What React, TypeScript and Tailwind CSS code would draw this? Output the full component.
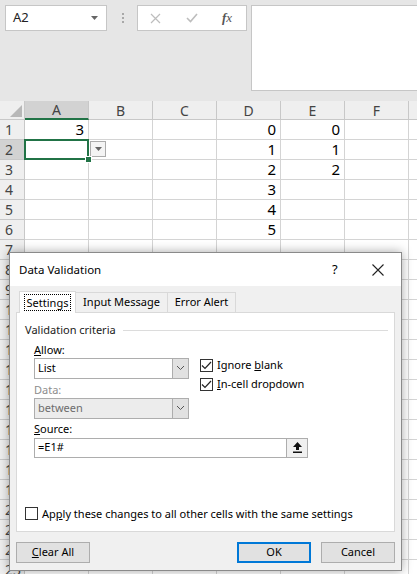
import React from 'react';

const COLS = ['A', 'B', 'C', 'D', 'E', 'F'];
const ROWS = Array.from({ length: 23 }, (_, i) => i + 1);
const DATA: Record<string, string> = {
  A1: '3',
  D1: '0', E1: '0',
  D2: '1', E2: '1',
  D3: '2', E3: '2',
  D4: '3', D5: '4', D6: '5',
};

const ui = { fontFamily: '"Noto Sans", "Segoe UI", sans-serif' };

function Chevron() {
  return (
    <svg width="9" height="6" viewBox="0 0 9 6" fill="none" stroke="#555" strokeWidth="1">
      <path d="M1 1 L4.5 4.5 L8 1" />
    </svg>
  );
}

function Check({ checked }: { checked?: boolean }) {
  return (
    <span className="flex h-[13px] w-[13px] shrink-0 items-center justify-center border border-[#333] bg-white">
      {checked && (
        <svg width="11" height="9" viewBox="0 0 11 9" fill="none" stroke="#222" strokeWidth="1.2">
          <path d="M1 4.5 L4 7.5 L10 1" />
        </svg>
      )}
    </span>
  );
}

function TopBar() {
  return (
    <div className="flex h-[101px] items-start bg-[#e6e6e6] pt-[5px] pl-[5px]">
      <div className="flex h-[26px] w-[102px] items-center justify-between border border-[#c6c6c6] bg-white pl-[7px] pr-[8px] text-[13px] text-[#222]" style={ui}>
        <span>A2</span>
        <svg width="7" height="4" viewBox="0 0 7 4"><path d="M0 0 H7 L3.5 4 Z" fill="#666" /></svg>
      </div>
      <div className="ml-[15px] mt-[8px] flex h-[10px] flex-col justify-between">
        <span className="h-[2px] w-[2px] bg-[#a8a8a8]" />
        <span className="h-[2px] w-[2px] bg-[#a8a8a8]" />
        <span className="h-[2px] w-[2px] bg-[#a8a8a8]" />
      </div>
      <div className="ml-[13px] flex h-[26px] w-[110px] items-center border border-[#c6c6c6] bg-white pl-[12px]">
        <svg width="11" height="11" viewBox="0 0 11 11" stroke="#bdbdbd" strokeWidth="1.2">
          <path d="M1 1 L10 10 M10 1 L1 10" />
        </svg>
        <svg className="ml-[25px]" width="12" height="10" viewBox="0 0 12 10" fill="none" stroke="#bdbdbd" strokeWidth="1.6">
          <path d="M1 5 L4.5 8.5 L11 1" />
        </svg>
        <span className="ml-[24px] text-[13px] italic text-[#555]" style={{ fontFamily: '"Liberation Serif", serif' }}>
          <b>f</b>x
        </span>
      </div>
      <div className="ml-[4px] h-[86px] flex-1 border border-[#c6c6c6] border-r-0 bg-white" />
    </div>
  );
}

function Sheet() {
  return (
    <div className="grid grid-cols-[25px_repeat(6,64px)_8px] bg-white text-[14px]" style={ui}>
      <div className="relative h-[19px] border-r border-b border-[#c8c8c8] bg-[#efefef]">
        <svg className="absolute bottom-[2px] right-[2px]" width="12" height="12" viewBox="0 0 12 12">
          <path d="M12 0 V12 H0 Z" fill="#b8b8b8" />
        </svg>
      </div>
      {COLS.map((c) => (
        <div
          key={c}
          className={`flex h-[19px] items-center justify-center border-r border-[#c8c8c8] text-[#444] ${
            c === 'A' ? 'border-b-2 border-b-[#217346] bg-[#d2d2d2]' : 'border-b border-b-[#c8c8c8] bg-[#efefef]'
          }`}
        >
          {c}
        </div>
      ))}
      <div className="h-[19px] border-b border-[#c8c8c8] bg-[#efefef]" />
      {ROWS.map((r) => (
        <React.Fragment key={r}>
          <div
            className={`flex h-[20px] items-center pl-[5px] text-[#444] border-r border-b border-[#c8c8c8] ${
              r === 2 ? 'bg-[#d2d2d2]' : 'bg-[#efefef]'
            }`}
          >
            {r}
          </div>
          {COLS.map((c) => (
            <div
              key={c}
              className="relative flex h-[20px] items-center justify-end border-r border-b border-[#d4d4d4] pr-[4px] text-[15px] text-black"
            >
              {DATA[c + r]}
              {c === 'A' && r === 2 && (
                <>
                  <span className="absolute -left-px -top-px h-[21px] w-[65px] border-2 border-[#217346]" />
                  <span className="absolute -bottom-[4px] -right-[4px] z-10 h-[7px] w-[7px] border border-white bg-[#217346]" />
                  <span className="absolute left-[65px] top-[1px] flex h-[16px] w-[16px] items-center justify-center border border-[#ababab] bg-[#f4f4f4]">
                    <svg width="7" height="4" viewBox="0 0 7 4"><path d="M0 0 H7 L3.5 4 Z" fill="#666" /></svg>
                  </span>
                </>
              )}
            </div>
          ))}
          <div className="h-[20px] border-b border-[#d4d4d4]" />
        </React.Fragment>
      ))}
    </div>
  );
}

function Select({ value, disabled }: { value: string; disabled?: boolean }) {
  return (
    <div
      className={`flex h-[21px] w-[155px] items-center border border-[#adadad] ${
        disabled ? 'bg-[#ececec] text-[#6d6d6d]' : 'bg-white text-black'
      }`}
    >
      <span className="flex-1 pl-[3px]">{value}</span>
      <span className="flex h-full w-[16px] items-center justify-center border-l border-[#adadad] bg-[#e1e1e1]">
        <Chevron />
      </span>
    </div>
  );
}

function Dialog() {
  return (
    <div
      className="absolute left-[9px] top-[252px] flex h-[319px] w-[393px] flex-col border border-[#8a8a8a] bg-[#f0f0f0] text-[11px] text-black shadow-[0_0_10px_rgba(0,0,0,0.35)]"
      style={ui}
    >
      <div className="flex h-[33px] shrink-0 items-center bg-white pl-[9px]">
        <span className="flex-1 text-[11.5px]">Data Validation</span>
        <span className="w-[20px] text-[13px]">?</span>
        <svg className="ml-[20px] mr-[17px]" width="12" height="12" viewBox="0 0 12 12" stroke="#222" strokeWidth="1.1">
          <path d="M0.5 0.5 L11.5 11.5 M11.5 0.5 L0.5 11.5" />
        </svg>
      </div>

      <div className="mt-[5px] flex h-[21px] items-end pl-[9px]">
        <div className="relative z-10 -mb-px flex h-[22px] w-[57px] items-center justify-center border border-b-0 border-[#d9d9d9] bg-white">
          <span className="border border-dotted border-black px-[2px] leading-[15px]">Settings</span>
        </div>
        <div className="flex h-[20px] w-[92px] items-center justify-center border border-l-0 border-b-0 border-[#d9d9d9] bg-[#f0f0f0]">
          Input Message
        </div>
        <div className="flex h-[20px] w-[68px] items-center justify-center border border-l-0 border-b-0 border-[#d9d9d9] bg-[#f0f0f0]">
          Error Alert
        </div>
      </div>

      <div className="mx-[6px] flex h-[220px] flex-col border border-[#d9d9d9] bg-white">
        <div className="mt-[9px] flex items-center pl-[8px] pr-[6px]">
          <span className="text-[#1a1a1a]">Validation criteria</span>
          <span className="ml-[7px] h-px flex-1 bg-[#dcdcdc]" />
        </div>

        <div className="flex pl-[17px]">
          <div className="flex flex-col">
            <span className="mt-[3px] h-[16px] leading-[16px]"><u>A</u>llow:</span>
            <Select value="List" />
            <span className="mt-[3px] h-[16px] leading-[16px] text-[#8d8d8d]">Data:</span>
            <Select value="between" disabled />
          </div>
          <div className="ml-[11px] mt-[17px] flex flex-col">
            <div className="flex h-[19px] items-center gap-[4px]">
              <Check checked />
              <span>Ignore <u>b</u>lank</span>
            </div>
            <div className="flex h-[19px] items-center gap-[4px]">
              <Check checked />
              <span><u>I</u>n-cell dropdown</span>
            </div>
          </div>
        </div>

        <div className="flex flex-col pl-[17px]">
          <span className="mt-[2px] h-[16px] leading-[16px]"><u>S</u>ource:</span>
          <div className="mt-[1px] flex h-[20px] w-[274px] items-center border border-[#adadad] bg-white">
            <span className="flex-1 pl-[3px]">=E1#</span>
            <span className="flex h-full w-[21px] items-center justify-center border-l border-[#adadad] bg-[#f0f0f0]">
              <svg width="9" height="11" viewBox="0 0 9 11" fill="#111">
                <path d="M4.5 0 L9 5 H6 V8 H3 V5 H0 Z" />
                <rect x="0" y="9.5" width="9" height="1.5" />
              </svg>
            </span>
          </div>
        </div>

        <div className="mb-[9px] mt-auto flex items-center gap-[4px] pl-[8px]">
          <Check />
          <span>Ap<u>p</u>ly these changes to all other cells with the same settings</span>
        </div>
      </div>

      <div className="mt-[10px] flex px-[6px]">
        <button className="h-[21px] w-[74px] border border-[#adadad] bg-[#e1e1e1]"><u>C</u>lear All</button>
        <button className="ml-auto h-[21px] w-[74px] border-2 border-[#0078d7] bg-[#e1e1e1]">OK</button>
        <button className="ml-[10px] h-[21px] w-[74px] border border-[#adadad] bg-[#e1e1e1]">Cancel</button>
      </div>
    </div>
  );
}

export default function App() {
  return (
    <div className="relative h-[574px] w-[417px] overflow-hidden bg-white">
      <TopBar />
      <Sheet />
      <Dialog />
    </div>
  );
}
